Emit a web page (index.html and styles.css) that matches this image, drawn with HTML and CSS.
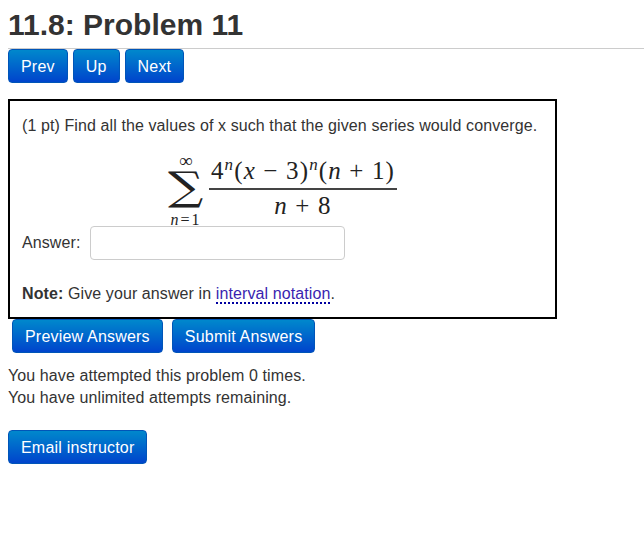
FILE: index.html
```html
<!DOCTYPE html>
<html lang="en">
<head>
    <meta charset="UTF-8">
    <title>11.8: Problem 11</title>
    <link rel="stylesheet" href="styles.css">
</head>
<body>
    <h1>11.8: Problem 11</h1>
    <div class="nav-buttons">
        <a class="btn">Prev</a>
        <a class="btn">Up</a>
        <a class="btn">Next</a>
    </div>

    <!-- Problem box -->
    <div class="problem">
        <p class="question">(1 pt) Find all the values of x such that the given series would converge.</p>
        <div class="formula">
            <div class="sum">
                <span class="sum-top">∞</span>
                <span class="sum-sign">∑</span>
                <span class="sum-bottom"><i>n</i>=1</span>
            </div>
            <div class="fraction">
                <div class="numerator">4<sup><i>n</i></sup>(<i>x</i> − 3)<sup><i>n</i></sup>(<i>n</i> + 1)</div>
                <div class="denominator"><i>n</i> + 8</div>
            </div>
        </div>
        <div class="answer-row">
            <label>Answer:</label>
            <input type="text" class="answer">
        </div>
        <p class="note"><b>Note:</b> Give your answer in <a class="knowl">interval notation</a>.</p>
    </div>

    <div class="submit-buttons">
        <a class="btn">Preview Answers</a>
        <a class="btn">Submit Answers</a>
    </div>

    <p class="attempts">You have attempted this problem 0 times.<br>You have unlimited attempts remaining.</p>

    <a class="btn">Email instructor</a>
</body>
</html>
```

FILE: styles.css
```css
body {
    margin: 0;
    padding: 0 0 0 8px;
    font-family: "Liberation Sans", Arial, sans-serif;
    font-size: 16px;
    line-height: 22px;
    letter-spacing: 0.1px;
    color: #333;
    background: white;
}
h1 {
    margin: 0;
    padding-top: 7px;
    height: 49px;
    box-sizing: border-box;
    font-size: 30px;
    line-height: 36px;
    font-weight: bold;
    letter-spacing: 0;
    border-bottom: 1px solid #ccc;
}
.btn {
    display: inline-block;
    box-sizing: border-box;
    height: 34px;
    padding: 6px 12px 4px;
    font-size: 16px;
    line-height: 22px;
    letter-spacing: 0.2px;
    color: white;
    background: linear-gradient(#0088cc, #0044cc);
    border: 1px solid #0055b8;
    border-radius: 4px;
}
.nav-buttons {
    display: flex;
    gap: 5px;
}
.problem {
    width: 549px;
    height: 220px;
    box-sizing: border-box;
    margin-top: 16px;
    padding: 14px 12px 0;
    border: 2px solid black;
}
.question {
    margin: 0;
}
.formula {
    display: flex;
    align-items: flex-start;
    justify-content: center;
    gap: 5px;
    height: 88px;
    margin-top: 4px;
    font-family: "Liberation Serif", "Times New Roman", serif;
    letter-spacing: 0;
    color: #222;
}
.sum {
    display: flex;
    flex-direction: column;
    align-items: center;
    width: 36px;
}
.sum-top {
    font-size: 19px;
    line-height: 16px;
    margin-top: 12px;
}
.sum-sign {
    margin-top: 3px;
    font-size: 52px;
    line-height: 28px;
    font-family: "DejaVu Serif", serif;
    transform: scale(0.95, 0.76);
}
.sum-bottom {
    margin-top: 13px;
    font-size: 16px;
    line-height: 13px;
    letter-spacing: 2px;
    white-space: nowrap;
}
.fraction {
    text-align: center;
    font-size: 25px;
    line-height: 30px;
    margin-top: 15px;
    letter-spacing: 1.15px;
}
.fraction sup {
    font-size: 17px;
    line-height: 0;
}
.numerator {
    padding: 0 2px 2px;
    border-bottom: 2px solid #444;
}
.denominator {
    padding-top: 1px;
}
.answer-row {
    display: flex;
    align-items: center;
    gap: 9px;
    margin-top: -3px;
}
.answer {
    width: 255px;
    height: 34px;
    box-sizing: border-box;
    border: 1px solid #ccc;
    border-radius: 4px;
    background: white;
}
.note {
    margin: 23px 0 0;
}
.knowl {
    color: #3a1fb0;
    border-bottom: 2px dotted #0000a0;
}
.submit-buttons {
    display: flex;
    gap: 9px;
    padding-left: 4px;
}
.attempts {
    margin: 12px 0 21px;
}
```
